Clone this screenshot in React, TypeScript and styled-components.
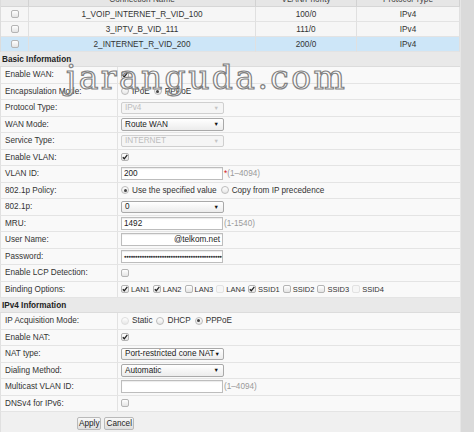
import { Fragment, CSSProperties } from 'react';
import styled, { createGlobalStyle } from 'styled-components';

const GlobalStyle = createGlobalStyle`
  html, body {
    margin: 0;
    padding: 0;
    background: #ffffff;
    overflow: hidden;
  }
  body {
    font-family: "Liberation Sans", Arial, sans-serif;
    font-size: 8.2px;
    color: #333;
  }
`;

const Page = styled.div`
  position: relative;
  display: flex;
  width: 474px;
  height: 432px;
  overflow: hidden;
`;

const Main = styled.div`
  width: 460px;
  display: flex;
  flex-direction: column;
  background: #fafafa;
`;

const ScrollTrack = styled.div`
  flex: 1;
  background: #dadada;
  border-left: 1px solid #e6e6e6;
`;

const Table = styled.div`
  display: grid;
  grid-template-columns: 28px 227px 101px 1fr;
  border-left: 1px solid #dcdcdc;
`;

const HeadCell = styled.div`
  height: 6px;
  overflow: hidden;
  display: flex;
  align-items: flex-end;
  justify-content: center;
  background: #e6e6e6;
  border-right: 1px solid #d2d2d2;
  border-bottom: 1px solid #d6d6d6;
  line-height: 12px;
  color: #444;
`;

const Cell = styled.div<{ $selected?: boolean }>`
  height: 15px;
  box-sizing: border-box;
  display: flex;
  align-items: center;
  justify-content: center;
  background: ${p => (p.$selected ? '#cde6f8' : '#f6f6f6')};
  border-right: 1px solid #e0e0e0;
  border-bottom: 1px solid #e3e3e3;
  color: #333;
`;

const SectionHead = styled.div`
  height: 15px;
  box-sizing: border-box;
  display: flex;
  align-items: center;
  padding-left: 2px;
  font-weight: bold;
  color: #222;
  background: #e9e9e9;
  border-bottom: 1px solid #dcdcdc;
`;

const Row = styled.div`
  height: 16.5px;
  box-sizing: border-box;
  display: grid;
  grid-template-columns: 117px 1fr;
  background: #f9f9f9;
  border-bottom: 1px solid #e4e4e4;
  border-left: 1px solid #e0e0e0;
`;

const Label = styled.div`
  display: flex;
  align-items: center;
  padding-left: 4px;
  border-right: 1px solid #e2e2e2;
  color: #333;
`;

const Value = styled.div<{ $small?: boolean }>`
  display: flex;
  align-items: center;
  padding-left: 3px;
  gap: 3px;
  white-space: nowrap;
  font-size: ${p => (p.$small ? '7.5px' : 'inherit')};
`;

const Option = styled.span<{ $tight?: boolean }>`
  display: inline-flex;
  align-items: center;
  gap: ${p => (p.$tight ? 2 : 3)}px;
  margin-right: ${p => (p.$tight ? 0 : 1)}px;
`;

const Box = styled.span<{ $disabled?: boolean }>`
  width: 6px;
  height: 6px;
  flex: none;
  display: inline-flex;
  align-items: center;
  justify-content: center;
  border: 1px solid ${p => (p.$disabled ? '#e2e2e2' : '#b4b4b4')};
  border-radius: 2px;
  background: ${p => (p.$disabled ? '#f6f6f6' : 'linear-gradient(#ffffff, #e4e4e4)')};
`;

const RadioDot = styled.span<{ $disabled?: boolean }>`
  width: 6px;
  height: 6px;
  flex: none;
  display: inline-flex;
  align-items: center;
  justify-content: center;
  border: 1px solid ${p => (p.$disabled ? '#dedede' : '#bcbcbc')};
  border-radius: 50%;
  background: linear-gradient(#ffffff, #e6e6e6);
  &::after {
    content: '';
    width: 3px;
    height: 3px;
    border-radius: 50%;
    background: #444;
    display: ${p => (p.$disabled ? 'none' : 'var(--dot, none)')};
  }
`;

const Select = styled.div<{ $disabled?: boolean; $w?: number }>`
  width: ${p => p.$w ?? 103}px;
  height: 12.5px;
  box-sizing: border-box;
  display: flex;
  align-items: center;
  justify-content: space-between;
  padding: 0 4px 0 3px;
  border: 1px solid ${p => (p.$disabled ? '#cfcfcf' : '#a9a9a9')};
  border-radius: 2px;
  background: ${p => (p.$disabled ? '#f5f5f5' : 'linear-gradient(#ffffff, #ececec)')};
  color: ${p => (p.$disabled ? '#bdbdbd' : '#222')};
`;

const Arrow = styled.span<{ $disabled?: boolean }>`
  font-size: 5.5px;
  color: ${p => (p.$disabled ? '#c4c4c4' : '#111')};
`;

const Input = styled.div<{ $align?: string }>`
  width: 102px;
  height: 13px;
  box-sizing: border-box;
  display: flex;
  align-items: center;
  justify-content: ${p => p.$align ?? 'flex-start'};
  padding: 0 2px;
  border: 1px solid #bdbdbd;
  background: #ffffff;
  box-shadow: inset 0 1px 1px rgba(0, 0, 0, 0.08);
  color: #222;
  overflow: hidden;
`;

const Dots = styled.span`
  font-size: 4.5px;
  letter-spacing: -0.5px;
  color: #333;
`;

const Hint = styled.span`
  color: #9a9a9a;
  margin-left: -2px;
`;

const Req = styled.span`
  color: #d02020;
`;

const ButtonBar = styled.div`
  flex: 1;
  display: flex;
  align-items: flex-start;
  gap: 3px;
  padding: 5px 0 0 76px;
  background: #f0f0f0;
  border-left: 1px solid #e0e0e0;
`;

const Button = styled.button`
  height: 13px;
  padding: 0 1px;
  font-family: inherit;
  font-size: 8.2px;
  color: #222;
  border: 1px solid #b9b9b9;
  border-radius: 2px;
  background: linear-gradient(#f8f8f8, #dedede);
  line-height: 11px;
`;

const Watermark = styled.div`
  position: absolute;
  left: 66px;
  top: 58px;
  font-family: "DejaVu Serif", serif;
  font-size: 33px;
  letter-spacing: 2.4px;
  color: rgba(255, 255, 255, 0.6);
  -webkit-text-stroke: 1.2px #808080;
  pointer-events: none;
  white-space: nowrap;
`;

const Check = ({ on, disabled }: { on?: boolean; disabled?: boolean }) => (
  <Box $disabled={disabled}>
    {on && (
      <svg width="6" height="6" viewBox="0 0 6 6">
        <path d="M0.8 3.2 L2.3 4.8 L5.3 0.9" fill="none" stroke="#222" strokeWidth="1.3" />
      </svg>
    )}
  </Box>
);

const Radio = ({ on, disabled }: { on?: boolean; disabled?: boolean }) => (
  <RadioDot $disabled={disabled} style={on ? ({ '--dot': 'block' } as CSSProperties) : undefined} />
);

const connections = [
  { name: '1_VOIP_INTERNET_R_VID_100', vlan: '100/0', proto: 'IPv4' },
  { name: '3_IPTV_B_VID_111', vlan: '111/0', proto: 'IPv4' },
  { name: '2_INTERNET_R_VID_200', vlan: '200/0', proto: 'IPv4', selected: true },
];

const bindings = [
  { name: 'LAN1', on: true },
  { name: 'LAN2', on: true },
  { name: 'LAN3' },
  { name: 'LAN4', disabled: true },
  { name: 'SSID1', on: true },
  { name: 'SSID2' },
  { name: 'SSID3' },
  { name: 'SSID4', disabled: true },
];

const App = () => {
  return (
    <Page>
      <GlobalStyle />
      <Main>
        <Table>
          <HeadCell />
          <HeadCell>Connection Name</HeadCell>
          <HeadCell>VLAN/Priority</HeadCell>
          <HeadCell>Protocol Type</HeadCell>
          {connections.map(c => (
            <Fragment key={c.name}>
              <Cell $selected={c.selected}><Check /></Cell>
              <Cell $selected={c.selected}>{c.name}</Cell>
              <Cell $selected={c.selected}>{c.vlan}</Cell>
              <Cell $selected={c.selected}>{c.proto}</Cell>
            </Fragment>
          ))}
        </Table>

        <SectionHead>Basic Information</SectionHead>
        <Row>
          <Label>Enable WAN:</Label>
          <Value><Check on /></Value>
        </Row>
        <Row>
          <Label>Encapsulation Mode:</Label>
          <Value>
            <Option><Radio />IPoE</Option>
            <Option><Radio on />PPPoE</Option>
          </Value>
        </Row>
        <Row>
          <Label>Protocol Type:</Label>
          <Value><Select $disabled>IPv4<Arrow $disabled>▼</Arrow></Select></Value>
        </Row>
        <Row>
          <Label>WAN Mode:</Label>
          <Value><Select>Route WAN<Arrow>▼</Arrow></Select></Value>
        </Row>
        <Row>
          <Label>Service Type:</Label>
          <Value><Select $disabled>INTERNET<Arrow $disabled>▼</Arrow></Select></Value>
        </Row>
        <Row>
          <Label>Enable VLAN:</Label>
          <Value><Check on /></Value>
        </Row>
        <Row>
          <Label>VLAN ID:</Label>
          <Value>
            <Input>200</Input>
            <Hint><Req>*</Req>(1–4094)</Hint>
          </Value>
        </Row>
        <Row>
          <Label>802.1p Policy:</Label>
          <Value>
            <Option><Radio on />Use the specified value</Option>
            <Option><Radio />Copy from IP precedence</Option>
          </Value>
        </Row>
        <Row>
          <Label>802.1p:</Label>
          <Value><Select>0<Arrow>▼</Arrow></Select></Value>
        </Row>
        <Row>
          <Label>MRU:</Label>
          <Value>
            <Input>1492</Input>
            <Hint>(1-1540)</Hint>
          </Value>
        </Row>
        <Row>
          <Label>User Name:</Label>
          <Value><Input $align="flex-end">@telkom.net</Input></Value>
        </Row>
        <Row>
          <Label>Password:</Label>
          <Value><Input><Dots>{'●'.repeat(48)}</Dots></Input></Value>
        </Row>
        <Row>
          <Label>Enable LCP Detection:</Label>
          <Value><Check /></Value>
        </Row>
        <Row>
          <Label>Binding Options:</Label>
          <Value $small>
            {bindings.map(b => (
              <Option key={b.name} $tight><Check on={b.on} disabled={b.disabled} />{b.name}</Option>
            ))}
          </Value>
        </Row>

        <SectionHead>IPv4 Information</SectionHead>
        <Row>
          <Label>IP Acquisition Mode:</Label>
          <Value>
            <Option><Radio disabled />Static</Option>
            <Option><Radio />DHCP</Option>
            <Option><Radio on />PPPoE</Option>
          </Value>
        </Row>
        <Row>
          <Label>Enable NAT:</Label>
          <Value><Check on /></Value>
        </Row>
        <Row>
          <Label>NAT type:</Label>
          <Value><Select>Port-restricted cone NAT<Arrow>▼</Arrow></Select></Value>
        </Row>
        <Row>
          <Label>Dialing Method:</Label>
          <Value><Select>Automatic<Arrow>▼</Arrow></Select></Value>
        </Row>
        <Row>
          <Label>Multicast VLAN ID:</Label>
          <Value>
            <Input />
            <Hint>(1–4094)</Hint>
          </Value>
        </Row>
        <Row>
          <Label>DNSv4 for IPv6:</Label>
          <Value><Check /></Value>
        </Row>

        <ButtonBar>
          <Button>Apply</Button>
          <Button>Cancel</Button>
        </ButtonBar>
      </Main>
      <ScrollTrack />
      <Watermark>jaranguda.com</Watermark>
    </Page>
  );
};

export default App;
